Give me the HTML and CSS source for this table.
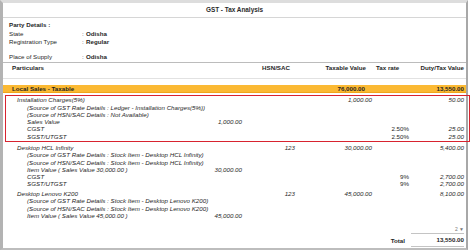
FILE: index.html
```html
<!DOCTYPE html>
<html>
<head>
<meta charset="utf-8">
<link rel="stylesheet" href="styles.css">
</head>
<body>
<div class="window">
  <div class="title">GST - Tax Analysis</div>
  <div class="party">
    <div class="party-head">Party Details :</div>
    <div class="kv first"><span class="k">State</span><span class="c">:</span><span class="v">Odisha</span></div>
    <div class="kv"><span class="k">Registration Type</span><span class="c">:</span><span class="v">Regular</span></div>
    <div class="kv gap"><span class="k">Place of Supply</span><span class="c">:</span><span class="v">Odisha</span></div>
  </div>
  <div class="row head">
    <div class="p">Particulars</div>
    <div class="hsn">HSN/SAC</div>
    <div class="tx">Taxable Value</div>
    <div class="rt">Tax rate</div>
    <div class="dt">Duty/Tax Value</div>
  </div>
  <div class="row band">
    <div class="p">Local Sales - Taxable</div>
    <div class="hsn"></div>
    <div class="tx">76,000.00</div>
    <div class="rt"></div>
    <div class="dt">13,550.00</div>
  </div>

  <div class="group marked">
    <div class="row item"><div class="p l1">Installation Charges(5%)</div><div class="hsn"></div><div class="tx">1,000.00</div><div class="rt"></div><div class="dt">50.00</div></div>
    <div class="row item"><div class="p l2">(Source of GST Rate Details : Ledger - Installation Charges(5%))</div><div class="hsn"></div><div class="tx"></div><div class="rt"></div><div class="dt"></div></div>
    <div class="row item"><div class="p l2">(Source of HSN/SAC Details : Not Available)</div><div class="hsn"></div><div class="tx"></div><div class="rt"></div><div class="dt"></div></div>
    <div class="row item"><div class="p l2"><span>Sales Value</span><span>1,000.00</span></div><div class="hsn"></div><div class="tx"></div><div class="rt"></div><div class="dt"></div></div>
    <div class="row item"><div class="p l2">CGST</div><div class="hsn"></div><div class="tx"></div><div class="rt">2.50%</div><div class="dt">25.00</div></div>
    <div class="row item"><div class="p l2">SGST/UTGST</div><div class="hsn"></div><div class="tx"></div><div class="rt">2.50%</div><div class="dt">25.00</div></div>
  </div>

  <div class="group">
    <div class="row item"><div class="p l1">Desktop HCL Infinity</div><div class="hsn">123</div><div class="tx">30,000.00</div><div class="rt"></div><div class="dt">5,400.00</div></div>
    <div class="row item"><div class="p l2">(Source of GST Rate Details : Stock Item - Desktop HCL Infinity)</div><div class="hsn"></div><div class="tx"></div><div class="rt"></div><div class="dt"></div></div>
    <div class="row item"><div class="p l2">(Source of HSN/SAC Details : Stock Item - Desktop HCL Infinity)</div><div class="hsn"></div><div class="tx"></div><div class="rt"></div><div class="dt"></div></div>
    <div class="row item"><div class="p l2"><span>Item Value ( Sales Value 30,000.00 )</span><span>30,000.00</span></div><div class="hsn"></div><div class="tx"></div><div class="rt"></div><div class="dt"></div></div>
    <div class="row item"><div class="p l2">CGST</div><div class="hsn"></div><div class="tx"></div><div class="rt">9%</div><div class="dt">2,700.00</div></div>
    <div class="row item"><div class="p l2">SGST/UTGST</div><div class="hsn"></div><div class="tx"></div><div class="rt">9%</div><div class="dt">2,700.00</div></div>
  </div>

  <div class="group">
    <div class="row item"><div class="p l1">Desktop Lenovo K200</div><div class="hsn">123</div><div class="tx">45,000.00</div><div class="rt"></div><div class="dt">8,100.00</div></div>
    <div class="row item"><div class="p l2">(Source of GST Rate Details : Stock Item - Desktop Lenovo K200)</div><div class="hsn"></div><div class="tx"></div><div class="rt"></div><div class="dt"></div></div>
    <div class="row item"><div class="p l2">(Source of HSN/SAC Details : Stock Item - Desktop Lenovo K200)</div><div class="hsn"></div><div class="tx"></div><div class="rt"></div><div class="dt"></div></div>
    <div class="row item"><div class="p l2"><span>Item Value ( Sales Value 45,000.00 )</span><span>45,000.00</span></div><div class="hsn"></div><div class="tx"></div><div class="rt"></div><div class="dt"></div></div>
  </div>

  <div class="spacer"></div>
  <div class="pager">2 &#9660;</div>
  <div class="total">
    <div class="total-label">Total</div>
    <div class="total-value">13,550.00</div>
  </div>
</div>
</body>
</html>
```

FILE: styles.css
```css
* { box-sizing: border-box; }
html, body { margin: 0; padding: 0; background: #ffffff; }
body {
  font-family: "Liberation Sans", Arial, sans-serif;
  font-size: 6.2px;
  color: #1f1f1f;
  width: 474px;
  height: 252px;
}
.window {
  width: 468px;
  height: 250px;
  border-left: 3px solid #b3b3b3;
  border-top: 3px solid #dddddd;
  border-right: 2px solid #a8a8a8;
  border-bottom: 2px solid #bdbdbd;
  display: flex;
  flex-direction: column;
}
.title {
  height: 15px;
  border-bottom: 1px solid #d6d6d6;
  text-align: center;
  font-weight: bold;
  font-size: 6.4px;
  line-height: 14px;
  color: #2a2a2a;
}
.party {
  padding: 3px 0 1px 6px;
}
.party-head {
  font-weight: bold;
  line-height: 8px;
  height: 8px;
}
.kv {
  display: flex;
  line-height: 8px;
  height: 8px;
}
.kv.first { margin-top: 1px; }
.kv.gap { margin-top: 7px; }
.kv .k { width: 73px; }
.kv .c { width: 4px; }
.kv .v { font-weight: bold; }

.row {
  display: grid;
  grid-template-columns: 1fr 50px 75px 40px 50px;
}
.head {
  border-top: 1px solid #bcbcbc;
  border-bottom: 1px solid #e2e2e2;
  height: 17px;
  padding-top: 1px;
  line-height: 8px;
  font-weight: bold;
}
.head .p { padding-left: 9px; }
.head .hsn { text-align: center; }
.head .tx { text-align: right; padding-right: 10px; }
.head .rt { text-align: left; }
.head .dt { text-align: right; padding-right: 2px; }

.band {
  margin-top: 6px;
  height: 8px;
  line-height: 8px;
  background: #fbb933;
  border-bottom: 1px solid #f0a51c;
  font-weight: bold;
}
.band .p { padding-left: 9px; }
.band .tx { text-align: right; padding-right: 11px; }
.band .dt { text-align: right; padding-right: 2px; }

.group {
  position: relative;
  margin-top: 2.3px;
  padding: 0;
}
.group.marked {
  padding: 1px 0 1.6px;
}
.group.marked::after {
  content: "";
  position: absolute;
  left: 2px;
  right: -4px;
  top: 0;
  bottom: 0;
  border: 1px solid #d8232f;
  pointer-events: none;
}
.item {
  line-height: 7.3px;
  height: 7.3px;
  font-style: italic;
  white-space: nowrap;
}
.item .p { display: flex; justify-content: space-between; padding-right: 9px; }
.item .l1 { padding-left: 14px; }
.item .l2 { padding-left: 24px; }
.item .hsn { text-align: right; padding-right: 6px; }
.item .tx { text-align: right; padding-right: 4px; }
.item .rt { text-align: right; padding-right: 7px; font-style: normal; }
.item .dt { text-align: right; padding-right: 2px; }

.spacer { flex: 1; }
.pager {
  text-align: right;
  padding-right: 2px;
  line-height: 7px;
  height: 7px;
  color: #777;
  font-size: 5px;
}
.total {
  display: flex;
  justify-content: flex-end;
  align-items: center;
  margin-top: 0;
  margin-bottom: 1px;
}
.total-label {
  font-weight: bold;
  margin-right: 6px;
}
.total-value {
  width: 53px;
  margin-right: 2px;
  border-top: 1px solid #c4c4c4;
  border-bottom: 1px solid #c4c4c4;
  height: 14px;
  line-height: 12px;
  text-align: right;
  font-weight: bold;
}
```
